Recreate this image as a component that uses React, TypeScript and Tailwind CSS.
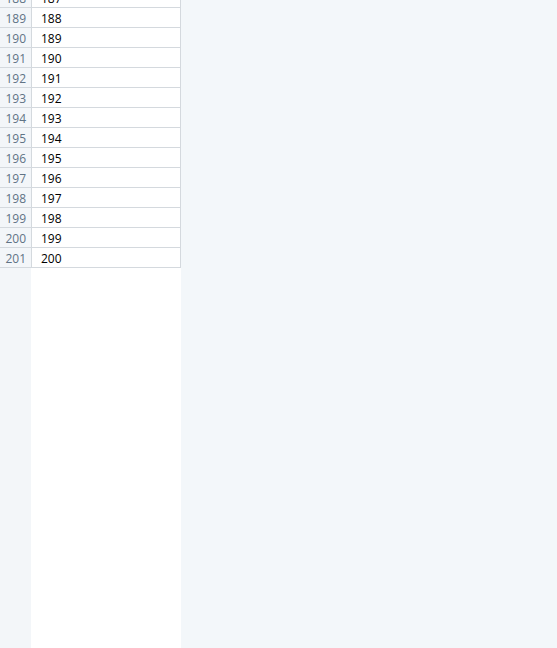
import React from "react";

const rows = Array.from({ length: 14 }, (_, i) => 188 + i);

const GridRow = ({ n }: { n: number }) => {
  return (
    <div className="flex h-[20px] text-[12px] leading-[21px]">
      <div className="w-[32px] shrink-0 overflow-hidden border-b border-r border-[#d4d9de] bg-[#f3f6f9] pr-[5px] text-right text-[#5f7385]">
        {n}
      </div>
      <div className="w-[149px] shrink-0 overflow-hidden border-b border-r border-[#d4d9de] bg-white pl-[9px] text-black">
        {n - 1}
      </div>
    </div>
  );
};

const App = () => {
  return (
    <div
      className="flex h-[648px] w-[557px] overflow-hidden bg-[#f3f7fa]"
      style={{ fontFamily: '"Open Sans", "DejaVu Sans", sans-serif' }}
    >
      <div className="flex w-[181px] flex-col">
        <div className="mt-[-12px] flex flex-col">
          {rows.map((n) => (
            <GridRow key={n} n={n} />
          ))}
        </div>
        <div className="flex flex-1">
          <div className="w-[31px] bg-[#f3f6f9]" />
          <div className="w-[150px] bg-white" />
        </div>
      </div>
    </div>
  );
};

export default App;
